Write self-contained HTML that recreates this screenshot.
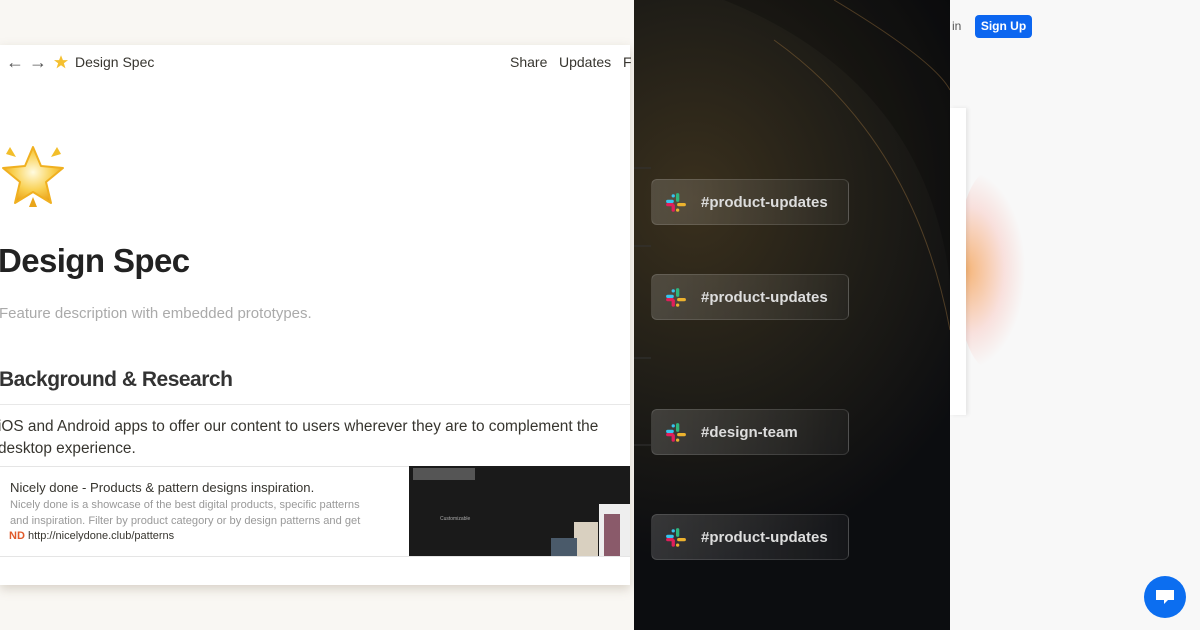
<!DOCTYPE html>
<html><head><meta charset="utf-8"><style>
*{margin:0;padding:0;box-sizing:border-box}
body{width:1200px;height:630px;overflow:hidden;position:relative;background:#f9f7f3;font-family:"Liberation Sans",sans-serif}
.card{position:absolute;left:0;top:45px;width:630px;height:540px;background:#fff;box-shadow:0 4px 10px rgba(120,100,70,.25)}
.t{position:absolute;white-space:nowrap}
.dark{position:absolute;left:634px;top:0;width:316px;height:630px;background:radial-gradient(ellipse 320px 360px at 60px 200px,#3a301d 0%,#1f1d17 55%,#0c0d10 100%);overflow:hidden}
.pill{position:absolute;left:17px;width:198px;height:46px;border:1px solid rgba(255,255,255,.12);border-radius:6px;background:linear-gradient(90deg,rgba(255,255,255,.16),rgba(255,255,255,.04));color:#ddd;font-size:15px;font-weight:bold;z-index:2}
.pill span{position:absolute;left:49px;top:14px}
.right{position:absolute;left:950px;top:0;width:250px;height:630px;background:#f8f8f8}
</style></head><body>
<div class="card">
  <div class="t" style="left:6px;top:7px;font-size:18px;color:#555">←&nbsp;→</div>
  <svg style="position:absolute;left:53px;top:9px" width="16" height="16" viewBox="0 0 50 50"><polygon points="25,4 31,19 47,19 34,29 39,45 25,35 11,45 16,29 3,19 19,19" fill="#f5c030"/></svg>
  <div class="t" style="left:75px;top:9px;font-size:14px;color:#37352f">Design Spec</div>
  <div class="t" style="left:510px;top:9px;font-size:14px;color:#37352f">Share</div>
  <div class="t" style="left:559px;top:9px;font-size:14px;color:#37352f">Updates</div>
  <div class="t" style="left:623px;top:9px;font-size:14px;color:#37352f">F</div>
  <svg style="position:absolute;left:1px;top:92px" width="66" height="70" viewBox="0 0 66 70"><defs><radialGradient id="g" cx=".5" cy=".45" r=".6"><stop offset="0" stop-color="#fffbe0"/><stop offset=".55" stop-color="#f9d050"/><stop offset="1" stop-color="#e89a10"/></radialGradient></defs><polygon points="32,10 40,29 62,31 45,45 50,66 32,55 14,66 19,45 2,31 24,29" fill="url(#g)" stroke="#f0b020" stroke-width="2" stroke-linejoin="round"/><polygon points="9,10 15,20 5,17" fill="#f2be2a"/><polygon points="56,10 50,20 60,17" fill="#f2be2a"/><polygon points="32,60 36,70 28,70" fill="#e9a51a"/></svg>
  <div class="t" style="left:-2px;top:197px;font-size:33px;font-weight:bold;color:#222;letter-spacing:-.6px">Design Spec</div>
  <div class="t" style="left:-1px;top:260px;font-size:15px;color:#aaa">Feature description with embedded prototypes.</div>
  <div class="t" style="left:-1px;top:323px;font-size:21px;font-weight:bold;color:#333;letter-spacing:-.5px">Background &amp; Research</div>
  <div style="position:absolute;left:0;top:359px;width:630px;height:1px;background:#e8e8e8"></div>
  <div class="t" style="left:-2px;top:371px;font-size:15.4px;color:#37352f;line-height:22px">iOS and Android apps to offer our content to users wherever they are to complement the<br>desktop experience.</div>
  <div style="position:absolute;left:0;top:421px;width:630px;height:91px;border-top:1px solid #e5e5e5;border-bottom:1px solid #e5e5e5"></div>
  <div class="t" style="left:10px;top:435px;font-size:13.1px;color:#37352f">Nicely done - Products &amp; pattern designs inspiration.</div>
  <div class="t" style="left:10px;top:452px;font-size:11.1px;color:#999;line-height:16px">Nicely done is a showcase of the best digital products, specific patterns<br>and inspiration. Filter by product category or by design patterns and get</div>
  <div class="t" style="left:9px;top:485px;font-size:11px;color:#e05a2a;font-weight:bold">ND</div>
  <div class="t" style="left:28px;top:485px;font-size:11px;color:#37352f">http://nicelydone.club/patterns</div>
  <div style="position:absolute;left:409px;top:421px;width:221px;height:90px;background:#1a1a1a;overflow:hidden">
    <div style="position:absolute;left:4px;top:2px;width:62px;height:12px;background:#555"></div>
    <div style="position:absolute;left:31px;top:50px;font-size:5px;color:#aaa">Customizable</div>
    <div style="position:absolute;left:190px;top:38px;width:31px;height:52px;background:#eee"></div>
    <div style="position:absolute;left:165px;top:56px;width:24px;height:34px;background:#d9d0c0"></div>
    <div style="position:absolute;left:195px;top:48px;width:16px;height:42px;background:#8a5a6a"></div>
    <div style="position:absolute;left:142px;top:72px;width:26px;height:18px;background:#4a5a6a"></div>
  </div>
</div>
<div class="dark">
  <svg style="position:absolute;left:0;top:0" width="316" height="630"><path d="M90,0 Q290,80 316,280 L316,0Z" fill="rgba(0,0,0,.2)"/><path d="M140,40 Q280,140 316,330" stroke="rgba(150,110,60,.45)" stroke-width="1" fill="none"/><path d="M200,0 Q300,60 316,90" stroke="rgba(150,110,60,.45)" stroke-width="1" fill="none"/>
  <line x1="0" y1="168" x2="17" y2="168" stroke="#333"/><line x1="0" y1="246" x2="17" y2="246" stroke="#333"/><line x1="0" y1="358" x2="17" y2="358" stroke="#333"/><line x1="0" y1="445" x2="17" y2="445" stroke="#333"/></svg>
  <div class="pill" style="top:179px"><svg style="position:absolute;left:13px;top:12px" width="22" height="22" viewBox="0 0 20 20"><rect x="1" y="7" width="7" height="3" rx="1.5" fill="#36c5f0"/><rect x="6" y="2" width="3" height="3" rx="1.5" fill="#36c5f0"/><rect x="10" y="1" width="3" height="8" rx="1.5" fill="#2eb67d"/><rect x="11" y="10" width="8" height="3" rx="1.5" fill="#ecb22e"/><rect x="10" y="15" width="3" height="3" rx="1.5" fill="#ecb22e"/><rect x="1" y="10" width="7" height="3" rx="1.5" fill="#e01e5a"/><rect x="6" y="11" width="3" height="7" rx="1.5" fill="#e01e5a"/></svg><span>#product-updates</span></div>
  <div class="pill" style="top:274px"><svg style="position:absolute;left:13px;top:12px" width="22" height="22" viewBox="0 0 20 20"><rect x="1" y="7" width="7" height="3" rx="1.5" fill="#36c5f0"/><rect x="6" y="2" width="3" height="3" rx="1.5" fill="#36c5f0"/><rect x="10" y="1" width="3" height="8" rx="1.5" fill="#2eb67d"/><rect x="11" y="10" width="8" height="3" rx="1.5" fill="#ecb22e"/><rect x="10" y="15" width="3" height="3" rx="1.5" fill="#ecb22e"/><rect x="1" y="10" width="7" height="3" rx="1.5" fill="#e01e5a"/><rect x="6" y="11" width="3" height="7" rx="1.5" fill="#e01e5a"/></svg><span>#product-updates</span></div>
  <div class="pill" style="top:409px"><svg style="position:absolute;left:13px;top:12px" width="22" height="22" viewBox="0 0 20 20"><rect x="1" y="7" width="7" height="3" rx="1.5" fill="#36c5f0"/><rect x="6" y="2" width="3" height="3" rx="1.5" fill="#36c5f0"/><rect x="10" y="1" width="3" height="8" rx="1.5" fill="#2eb67d"/><rect x="11" y="10" width="8" height="3" rx="1.5" fill="#ecb22e"/><rect x="10" y="15" width="3" height="3" rx="1.5" fill="#ecb22e"/><rect x="1" y="10" width="7" height="3" rx="1.5" fill="#e01e5a"/><rect x="6" y="11" width="3" height="7" rx="1.5" fill="#e01e5a"/></svg><span>#design-team</span></div>
  <div class="pill" style="top:514px"><svg style="position:absolute;left:13px;top:12px" width="22" height="22" viewBox="0 0 20 20"><rect x="1" y="7" width="7" height="3" rx="1.5" fill="#36c5f0"/><rect x="6" y="2" width="3" height="3" rx="1.5" fill="#36c5f0"/><rect x="10" y="1" width="3" height="8" rx="1.5" fill="#2eb67d"/><rect x="11" y="10" width="8" height="3" rx="1.5" fill="#ecb22e"/><rect x="10" y="15" width="3" height="3" rx="1.5" fill="#ecb22e"/><rect x="1" y="10" width="7" height="3" rx="1.5" fill="#e01e5a"/><rect x="6" y="11" width="3" height="7" rx="1.5" fill="#e01e5a"/></svg><span>#product-updates</span></div>
</div>
<div class="right">
  <div style="position:absolute;left:6px;top:170px;width:70px;height:200px;border-radius:50%;background:radial-gradient(ellipse at 15% 50%,rgba(245,170,100,.85) 0%,rgba(250,180,170,.35) 45%,transparent 70%)"></div>
  <div style="position:absolute;left:0;top:108px;width:16px;height:307px;background:#fff;box-shadow:2px 0 4px rgba(0,0,0,.08)"></div>
  <div class="t" style="left:2px;top:19px;font-size:12px;color:#555">in</div>
  <div style="position:absolute;left:25px;top:15px;width:57px;height:23px;background:#0c66f0;border-radius:4px;color:#fff;font-size:12px;font-weight:bold;text-align:center;line-height:23px">Sign Up</div>
  <div style="position:absolute;left:194px;top:576px;width:42px;height:42px;border-radius:50%;background:#0c6ef0"><svg style="position:absolute;left:11px;top:13px" width="20" height="17" viewBox="0 0 20 17"><path d="M1,1 H19 V11 H13 L9,15 V11 H1Z" fill="#fff"/></svg></div>
</div>
</body></html>
